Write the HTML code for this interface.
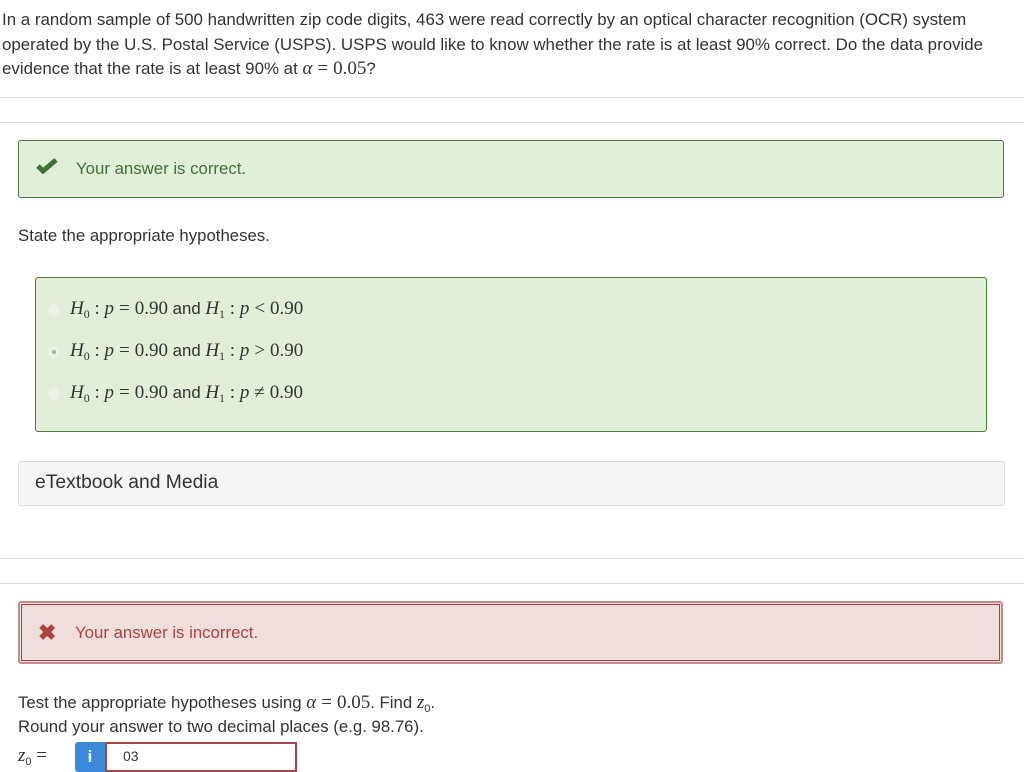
<!DOCTYPE html>
<html><head><style>
body{margin:0;width:1024px;height:760px;overflow:hidden;font-family:"Liberation Sans",sans-serif;color:#333;font-size:16.8px;background:#fff;position:relative}
.a{position:absolute}
.m{font-family:"Liberation Serif",serif;font-size:19px}
.i{font-style:italic}
.s{font-size:12px;position:relative;top:4px;line-height:0}
.r{height:42px;line-height:42px;white-space:nowrap}
.d{display:inline-block;width:12px;height:12px;border-radius:50%;background:#eef3ea;vertical-align:middle;margin-right:10px;box-sizing:border-box}
.e{margin:0 5px}
</style></head><body>
<div class="a" style="left:2px;top:8px;width:1020px;line-height:24.5px;font-size:16.9px;white-space:nowrap">In a random sample of 500 handwritten zip code digits, 463 were read correctly by an optical character recognition (OCR) system<br>operated by the U.S. Postal Service (USPS). USPS would like to know whether the rate is at least 90% correct. Do the data provide<br>evidence that the rate is at least 90% at <span class="m"><i>α</i><span class="e">=</span>0.05</span>?</div>
<div class="a" style="left:0;top:97px;width:1024px;height:1px;background:#ddd"></div>
<div class="a" style="left:0;top:122px;width:1024px;height:1px;background:#ddd"></div>
<div class="a" style="left:18px;top:140px;width:984px;height:56px;background:#e1eed8;border:1px solid #4a7a3e;border-radius:3px"></div>
<svg class="a" style="left:36px;top:158px" width="22" height="16" viewBox="0 0 22 16"><path d="M2 8l5 5L20 2" stroke="#3e7338" stroke-width="5" fill="none"/></svg>
<div class="a" style="left:76px;top:159px;color:#3e7338">Your answer is correct.</div>
<div class="a" style="left:18px;top:226px">State the appropriate hypotheses.</div>
<div class="a" style="left:35px;top:277px;width:950px;height:153px;background:#e1eed8;border:1px solid #4a7a3e;border-radius:3px"></div>
<div class="a" style="left:48px;top:288px">
<div class="r"><span class="d"></span><span class="m"><i>H</i><span class="s">0</span> : <i>p</i><span class="e">=</span>0.90</span> and <span class="m"><i>H</i><span class="s">1</span> : <i>p</i><span class="e">&lt;</span>0.90</span></div>
<div class="r"><span class="d" style="border:4px solid #eef3ea;background:#aaa"></span><span class="m"><i>H</i><span class="s">0</span> : <i>p</i><span class="e">=</span>0.90</span> and <span class="m"><i>H</i><span class="s">1</span> : <i>p</i><span class="e">&gt;</span>0.90</span></div>
<div class="r"><span class="d"></span><span class="m"><i>H</i><span class="s">0</span> : <i>p</i><span class="e">=</span>0.90</span> and <span class="m"><i>H</i><span class="s">1</span> : <i>p</i><span class="e">≠</span>0.90</span></div>
</div>
<div class="a" style="left:18px;top:461px;width:985px;height:43px;background:#f5f5f5;border:1px solid #ddd;border-radius:3px"></div>
<div class="a" style="left:35px;top:472px;font-size:19.3px">eTextbook and Media</div>
<div class="a" style="left:0;top:558px;width:1024px;height:1px;background:#ddd"></div>
<div class="a" style="left:0;top:583px;width:1024px;height:1px;background:#ddd"></div>
<div class="a" style="left:18px;top:601px;width:981px;height:59px;background:#f0dedd;border:2px solid #c98b88;outline:1px solid #a94442;outline-offset:-4px;border-radius:3px"></div>
<div class="a" style="left:38px;top:620px;color:#a94442;font-size:22px;font-weight:bold">✖</div>
<div class="a" style="left:75px;top:623px;color:#a94442">Your answer is incorrect.</div>
<div class="a" style="left:18px;top:691px;line-height:24px">Test the appropriate hypotheses using <span class="m"><i>α</i><span class="e">=</span>0.05</span>. Find <span class="m i">z</span><span class="s" style="font-size:11px">0</span>.<br>Round your answer to two decimal places (e.g. 98.76).</div>
<div class="a" style="left:18px;top:745px"><span class="m i">z</span><span class="s" style="font-size:11px">0</span> <span class="m">=</span></div>
<div class="a" style="left:75px;top:742px;width:30px;height:30px;background:#3b8ad9;border-radius:3px 0 0 3px;color:#fff;font-weight:bold;text-align:center;line-height:30px">i</div>
<div class="a" style="left:105px;top:742px;width:192px;height:30px;border:2px solid #a94442;background:#fff;box-sizing:border-box"><div style="margin:4px 0 0 16px;font-size:14px">03</div></div>
</body></html>
